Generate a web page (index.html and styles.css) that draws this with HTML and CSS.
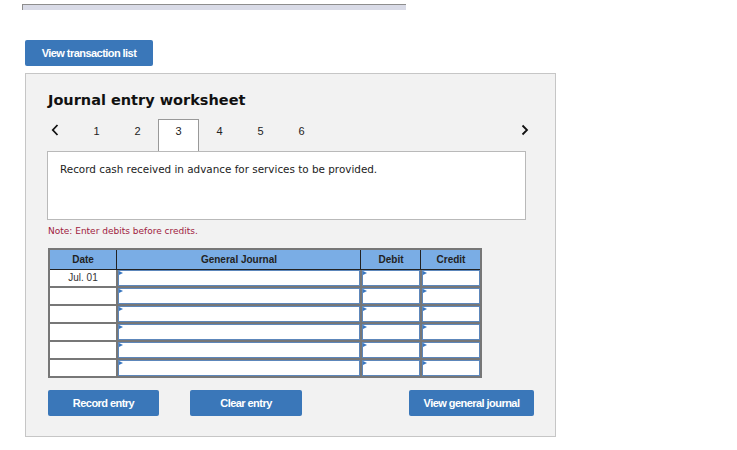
FILE: index.html
```html
<!DOCTYPE html>
<html lang="en">
<head>
<meta charset="utf-8">
<title>Journal entry worksheet</title>
<link rel="stylesheet" href="styles.css">
</head>
<body>
<div class="topbar"></div>
<button class="btn btn-top">View transaction list</button>
<section class="panel">
  <h1 class="title">Journal entry worksheet</h1>
  <nav class="tabs">
    <span class="chev chev-left"><svg width="8" height="12" viewBox="0 0 8 12"><path d="M6.5 1 L1.8 6 L6.5 11" fill="none" stroke="#111" stroke-width="1.8"/></svg></span>
    <span class="tab">1</span>
    <span class="tab">2</span>
    <span class="tab tab-active">3</span>
    <span class="tab">4</span>
    <span class="tab">5</span>
    <span class="tab">6</span>
    <span class="spacer"></span>
    <span class="chev chev-right"><svg width="8" height="12" viewBox="0 0 8 12"><path d="M1.5 1.5 L6 6 L1.5 10.5" fill="none" stroke="#111" stroke-width="1.8"/></svg></span>
  </nav>
  <div class="desc">Record cash received in advance for services to be provided.</div>
  <p class="note">Note: Enter debits before credits.</p>
  <div class="jtable">
    <div class="jrow jhead">
      <div class="hc">Date</div>
      <div class="hc">General Journal</div>
      <div class="hc">Debit</div>
      <div class="hc">Credit</div>
    </div>
    <div class="jbody">
      <div class="jrow">
        <div class="dc">Jul. 01</div>
        <div class="ic"></div><div class="ic"></div><div class="ic"></div>
      </div>
      <div class="jrow">
        <div class="dc"></div>
        <div class="ic"></div><div class="ic"></div><div class="ic"></div>
      </div>
      <div class="jrow">
        <div class="dc"></div>
        <div class="ic"></div><div class="ic"></div><div class="ic"></div>
      </div>
      <div class="jrow">
        <div class="dc"></div>
        <div class="ic"></div><div class="ic"></div><div class="ic"></div>
      </div>
      <div class="jrow">
        <div class="dc"></div>
        <div class="ic"></div><div class="ic"></div><div class="ic"></div>
      </div>
      <div class="jrow">
        <div class="dc"></div>
        <div class="ic"></div><div class="ic"></div><div class="ic"></div>
      </div>
    </div>
  </div>
  <div class="actions">
    <button class="btn btn-record">Record entry</button>
    <button class="btn btn-clear">Clear entry</button>
    <span class="spacer"></span>
    <button class="btn btn-view">View general journal</button>
  </div>
</section>
</body>
</html>
```
FILE: styles.css
```css
html, body {
  margin: 0;
  padding: 0;
  background: #ffffff;
}
body {
  font-family: "DejaVu Sans", Verdana, sans-serif;
  color: #222;
}
.topbar {
  margin: 4px 0 0 22px;
  width: 383px;
  height: 5px;
  border-top: 1px solid #8e8e8e;
  border-left: 1px solid #8e8e8e;
  background: #d9dbe7;
}
.btn {
  display: block;
  height: 26px;
  border: none;
  border-radius: 2px;
  background: #3a77b9;
  color: #fff;
  font-family: "Liberation Sans", Arial, sans-serif;
  font-weight: bold;
  font-size: 11px;
  letter-spacing: -0.55px;
  padding: 0;
  text-align: center;
  cursor: pointer;
}
.btn-top {
  margin: 30px 0 0 25px;
  width: 128px;
}
.panel {
  margin: 7px 0 0 25px;
  width: 529px;
  height: 362px;
  box-sizing: content-box;
  border: 1px solid #c6c6c6;
  background: #f2f2f2;
  padding: 0;
  display: flex;
  flex-direction: column;
}
.title {
  margin: 17px 0 0 22px;
  font-family: "DejaVu Sans", Verdana, sans-serif;
  font-weight: bold;
  font-size: 14.5px;
  line-height: 18px;
  color: #111;
}
.tabs {
  display: flex;
  align-items: flex-start;
  margin: 10px 0 0 22px;
  width: 483px;
  height: 32px;
}
.chev {
  display: flex;
  align-items: center;
  height: 22px;
}
.chev-left {
  width: 28px;
  padding-left: 3px;
  box-sizing: border-box;
}
.chev-right {
  width: 10px;
}
.tab {
  width: 41px;
  height: 32px;
  box-sizing: border-box;
  font-family: "Liberation Sans", Arial, sans-serif;
  font-size: 11px;
  line-height: 24px;
  padding-top: 0;
  text-align: center;
  color: #222;
}
.tab-active {
  background: #fff;
  border: 1px solid #999;
  border-bottom: none;
  line-height: 22px;
}
.spacer {
  flex: 1;
}
.desc {
  margin: 0 0 0 21px;
  width: 479px;
  border: 1px solid #b9b9b9;
  background: #fff;
  font-size: 10.4px;
  line-height: 13px;
  padding: 11px 0 0 12px;
  box-sizing: border-box;
  height: 69px;
  color: #222;
}
.note {
  margin: 5px 0 0 22px;
  font-size: 9px;
  line-height: 12px;
  color: #a0213e;
}
.jtable {
  margin: 11px 0 0 22px;
  width: 430px;
  border: 2px solid #777;
}
.jrow {
  display: grid;
  grid-template-columns: 66px 242px 58px 58px;
  column-gap: 2px;
}
.jhead {
  background: #7aade5;
  border-bottom: 1px solid #222;
  height: 19px;
}
.hc {
  font-family: "Liberation Sans", Arial, sans-serif;
  font-weight: bold;
  font-size: 10px;
  line-height: 19px;
  text-align: center;
  color: #222;
  box-shadow: 1px 0 0 #222;
}
.hc:last-child {
  box-shadow: none;
}
.jbody {
  display: flex;
  flex-direction: column;
  row-gap: 2px;
  background: #777;
}
.jbody .jrow {
  background: #777;
  height: 16px;
}
.dc {
  background: #fff;
  font-family: "Liberation Sans", Arial, sans-serif;
  font-size: 10px;
  line-height: 16px;
  text-align: center;
  color: #333;
}
.ic {
  background: #fff;
  border: 1px solid #5d87bb;
  position: relative;
}
.ic::before {
  content: "";
  position: absolute;
  left: 0;
  top: 0;
  border-left: 4px solid #3a77c0;
  border-top: 2.5px solid transparent;
  border-bottom: 2.5px solid transparent;
}
.actions {
  display: flex;
  margin: 12px 0 0 22px;
  width: 486px;
}
.btn-record {
  width: 111px;
}
.btn-clear {
  width: 112px;
  margin-left: 31px;
}
.btn-view {
  width: 125px;
}
```
